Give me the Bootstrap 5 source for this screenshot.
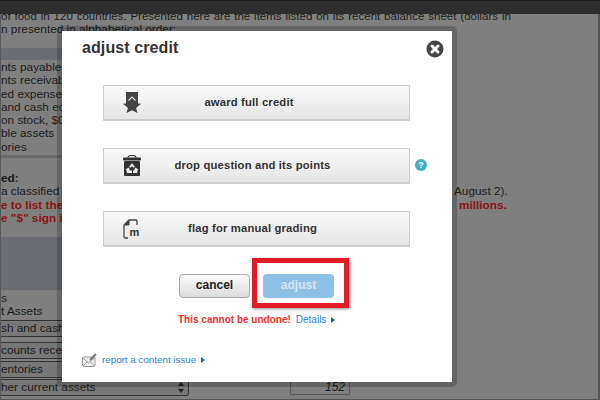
<!DOCTYPE html>
<html lang="en"><head><meta charset="utf-8"><title>adjust credit</title>
<link rel="stylesheet" href="https://cdn.jsdelivr.net/npm/bootstrap@5.3.0/dist/css/bootstrap.min.css">
<style>
html,body{width:600px;height:400px;overflow:hidden;margin:0}
body{background:#7f7f7f;font-family:"Liberation Sans",Arial,sans-serif;color:#1c1c1c;font-size:11.8px;line-height:13.3px;position:relative}
.topbar{position:absolute;left:0;top:0;width:600px;height:14px;background:#2e2e2e;border-top:1px solid #1d1d1d}
.pg{width:600px;height:400px;overflow:hidden;border-right:2px solid #555;border-left:1px solid #5a5a5a;border-bottom:1px solid #555;padding-top:9.500px}
.intro{height:38.500px;white-space:nowrap}
.firstline{font-size:11.500px;word-spacing:.7px}
.band1{height:12px;background:#6a6e73;width:180px}
.termrows{padding-top:1px;height:95px;white-space:nowrap;width:62px}
.termrows div{height:13.300px}
.band2{height:3px;background:#6a6a6a;width:180px}
.req{padding-top:14px;height:79px;white-space:nowrap}
.gap1{width:453px;flex:none}
.gap2{width:458px;flex:none}
.redt{color:#8e1414;font-weight:700}
.band3{height:53px;background:#6a6e73;width:180px}
.seltbl{padding-top:1px}
.lead-in{padding-top:1px;margin-bottom:0}
.pick{height:17px;border:1px solid #333;border-left:0;border-radius:0 3px 3px 0;background:#777;width:188px;line-height:15px;white-space:nowrap;display:flex;justify-content:space-between;align-items:center;padding-right:4px}
.p1{margin-bottom:5px;margin-top:1px}
.p2{margin-bottom:2px}
.p3{margin-bottom:1px}
.amt{width:60px;height:16px;border:1px solid #555;text-align:right;padding-right:4px;font-style:italic;margin-left:101px;line-height:14px;font-size:12px}
.frame{position:absolute;left:57px;top:26px;width:400px;height:361px;border-radius:5px;background:rgba(0,0,0,.2);padding:5px}
.dlg{background:#fff;height:351px;width:390px;padding:0 0 0 20px;position:relative;color:#333}
.dlgtitle{font-size:16px;line-height:20px;font-weight:700;color:#333;padding-top:7px;height:54px;letter-spacing:.1px}
.shut{position:absolute;left:364px;top:9px;width:18px;height:18px}
.optrow{display:flex;align-items:center;margin-left:21px;height:36px;margin-bottom:27px}
.optbtn{width:307px;height:36px;background:linear-gradient(#fafafa,#e5e5e5);border:1px solid #ccc;border-bottom-width:2px;border-radius:1px;display:flex;align-items:center;padding:0;color:#333;font-weight:700;font-size:11.300px;letter-spacing:.15px}
.optico{width:36px;flex:none;display:flex;justify-content:center;margin-left:10px;margin-right:9px}
.opttxt{width:187px;text-align:center;display:block}
.opttxt.short{width:180px}
.hlp{margin-left:5px;margin-bottom:2px}
.acts{display:flex;gap:13px;margin-left:97px;height:24px}
.cancelb,.adjb{width:71px;height:24px;border-radius:4px;font-size:12px;font-weight:700;display:flex;align-items:center;justify-content:center;padding:0}
.cancelb{background:linear-gradient(#fbfbfb,#dcdcdc);border:1px solid #aaa;color:#222}
.adjb{background:#8fc1e7;border:0;color:#d3e5f3}
.warnline{display:flex;align-items:center;margin-left:96px;margin-top:15px;height:14px;font-size:10px;font-weight:700;color:#e8332c;white-space:nowrap}
.lnk{color:#2b80d8;font-weight:400;text-decoration:none;font-size:10px}
.warnline .lnk{margin-left:5px}
.tri{display:inline-block;width:0;height:0;margin-left:5px;border-left:4px solid #1a5fb4;border-top:3.500px solid transparent;border-bottom:3.500px solid transparent}
.redbox{position:absolute;left:190px;top:227px;width:97px;height:50px;border:5px solid #e21c26;box-shadow:1px 1px 3px rgba(0,0,0,.45)}
.rep{display:flex;align-items:center;margin-top:25px;height:16px;white-space:nowrap}
.rep .lnk{margin-left:5px;font-size:9.800px}
</style></head>
<body>
<div class="pg">
  <div class="intro"><div class="firstline">of food in 120 countries. Presented here are the items listed on its recent balance sheet (dollars in</div><div>n presented in alphabetical order:</div></div>
  <div class="band1"></div>
  <div class="termrows"><div>nts payable</div><div>nts receivab</div><div>ed expenses</div><div>and cash equ</div><div>on stock, $0</div><div>ble assets</div><div>ories</div></div>
  <div class="band2"></div>
  <div class="req">
    <div class="fw-bold">ed:</div>
    <div class="d-flex"><span class="gap1">a classified</span><span>August 2).</span></div>
    <div class="d-flex redt"><span class="gap2">e to list the</span><span>millions.</span></div>
    <div class="redt">e "$" sign in</div>
  </div>
  <div class="band3"></div>
  <div class="seltbl">
    <div class="lead-in">s</div><div>t Assets</div>
    <div class="pick p1"><span>sh and cash</span></div>
    <div class="pick p2"><span>counts recei</span></div>
    <div class="pick p3"><span>entories</span></div>
    <div class="d-flex"><div class="pick flex-shrink-0"><span>her current assets</span><svg width="6" height="11" viewBox="0 0 6 11"><path d="M3 0l3 4H0zM3 11L0 7h6z" fill="#222"/></svg></div><div class="amt">152</div></div>
  </div>
</div>
<div class="topbar"></div>
<div class="frame">
  <div class="dlg">
    <div class="dlgtitle">adjust credit</div>
    <svg class="shut" viewBox="0 0 18 18"><circle cx="9" cy="9" r="8.500" fill="#444"/><path d="M6 6l6 6M12 6l-6 6" stroke="#fff" stroke-width="3" stroke-linecap="round"/></svg>
    <div class="optrow"><button class="optbtn" type="button"><span class="optico">
      <svg width="18" height="21" viewBox="0 0 18 21"><path d="M3 0h12v12H3z" fill="#444"/><path d="M9 6l2.300 5.200 6.700.6-5 4.300 1.600 4.900L9 18.300 3.400 21 5 16.100 0 11.800l6.700-.6z" fill="#444"/><path d="M5.500 8.500L9 5l3.500 3.500" fill="none" stroke="#ddd" stroke-width="1.200"/></svg></span><span class="opttxt short">award full credit</span></button></div>
    <div class="optrow"><button class="optbtn" type="button"><span class="optico">
      <svg width="18" height="21" viewBox="0 0 18 21"><path d="M5 2.500Q5 .5 9 .5t4 2" fill="none" stroke="#333" stroke-width="1.200"/><rect x="0" y="2.500" width="18" height="3" rx="1" fill="#333"/><rect x="1" y="6" width="16" height="15" rx="1" fill="#333"/><path d="M9 8l3 4-2 .5-1-1.500-1 1.500-2-.5zM3 14l3-1.500.8 3H9v2.500H4zM15 14l-3-1.500-.8 3H10v2.500h4z" fill="#eee"/></svg></span><span class="opttxt">drop question and its points</span></button>
      <svg class="hlp" width="12" height="12" viewBox="0 0 12 12"><circle cx="6" cy="6" r="6" fill="#45adc8"/><text x="6" y="9.300" text-anchor="middle" font-family="Liberation Sans" font-weight="700" font-size="9" fill="#fff">?</text></svg></div>
    <div class="optrow"><button class="optbtn" type="button"><span class="optico">
      <svg width="18" height="20" viewBox="0 0 18 20"><path d="M14 6V2q0-1-1-1H6L1 6v11.500q0 1.500 1.500 1.500H5" fill="none" stroke="#444" stroke-width="1.300"/><path d="M1 6h5V1" fill="#444" stroke="#444" stroke-width="1"/><text x="11.500" y="17" text-anchor="middle" font-family="Liberation Sans" font-weight="700" font-size="11" fill="#333">m</text></svg></span><span class="opttxt">flag for manual grading</span></button></div>
    <div class="acts"><button class="cancelb" type="button">cancel</button><button class="adjb" type="button">adjust</button></div>
    <div class="warnline"><span>This cannot be undone!</span><a class="lnk" href="#">Details</a><span class="tri"></span></div>
    <div class="rep">
      <svg width="15" height="14" viewBox="0 0 15 14"><rect x=".5" y="4" width="12.500" height="9.500" rx="1" fill="#eee" stroke="#999"/><path d="M1 5l5.500 5L12 5M1 13l4-4M12.500 13l-4-4" fill="none" stroke="#999"/><path d="M8 7l6-6" stroke="#777" stroke-width="2"/></svg>
      <a class="lnk" href="#">report a content issue</a><span class="tri"></span>
    </div>
    <div class="redbox"></div>
  </div>
</div>
</body></html>
